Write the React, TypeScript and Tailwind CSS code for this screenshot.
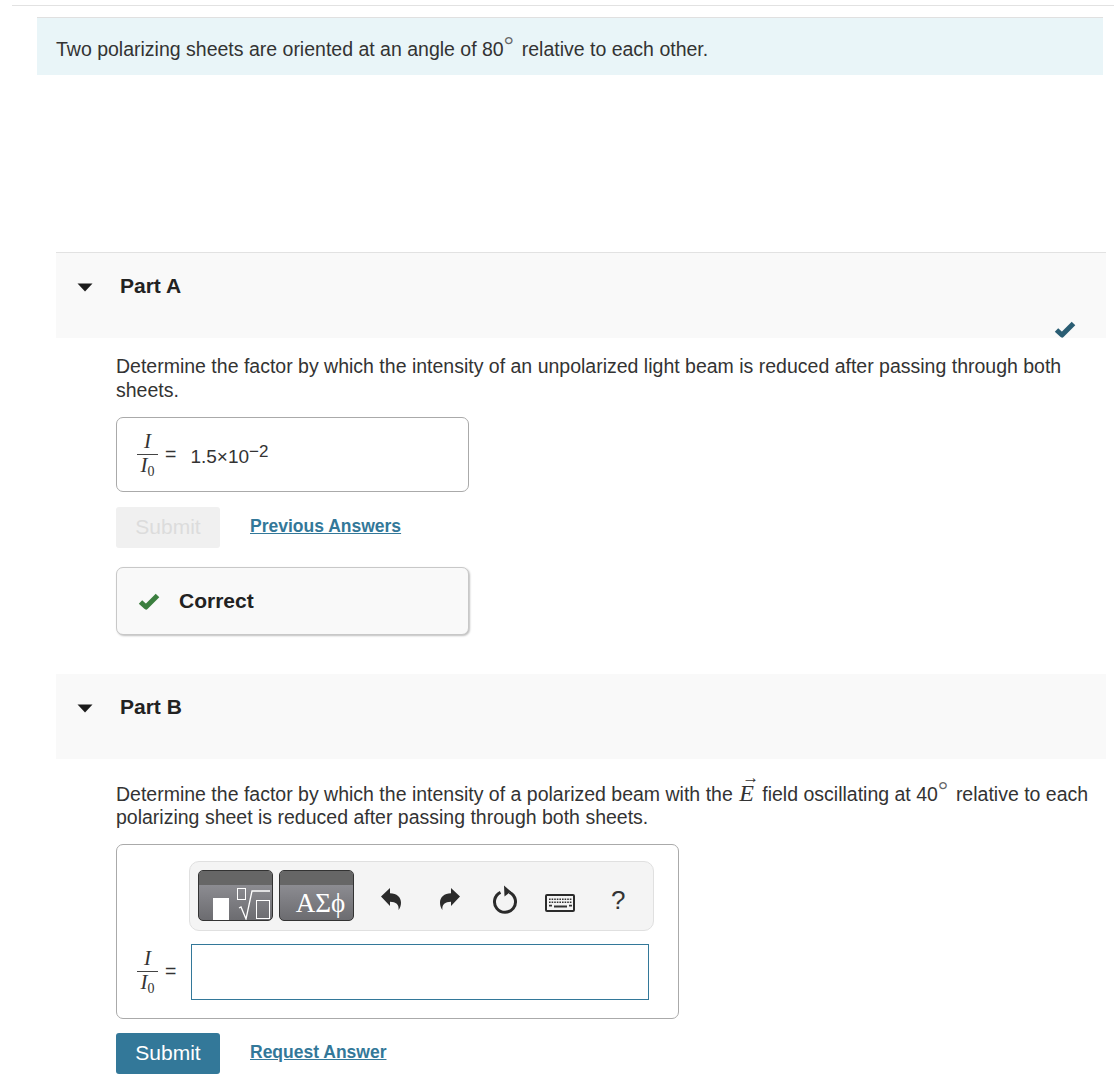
const sans = "font-['Liberation_Sans',Arial,sans-serif]";
const serif = "font-['Liberation_Serif','Times_New_Roman',serif]";

function Fraction() {
  return (
    <span className={`${serif} inline-flex w-[21px] flex-col items-center text-[21px] text-[#333]`}>
      <span className="h-[23px] w-full border-b border-[#444] text-center italic leading-[19px]">I</span>
      <span className="h-[23px] text-center leading-[21px]">
        <i>I</i>
        <span className="relative top-[4px] text-[14px]">0</span>
      </span>
    </span>
  );
}

function Degree() {
  return <span className={`${serif} relative top-[-3px] text-[25px] font-normal leading-none text-[#666]`}>°</span>;
}

function Caret() {
  return (
    <svg width="16" height="9" viewBox="0 0 16 9" className="mt-[9px] shrink-0">
      <path d="M0.5 0.5H15.5L8 8.5Z" fill="#1c1c1c" />
    </svg>
  );
}

function CheckMark({ className }: { className: string }) {
  return (
    <svg width="22" height="17" viewBox="0 0 22 17" className={className}>
      <path d="M2.500 9 8 14 19.500 2.500" fill="none" stroke="currentColor" strokeWidth="5" strokeLinejoin="round" />
    </svg>
  );
}

function PartHeader({ title, check }: { title: string; check?: boolean }) {
  return (
    <div className="relative ml-[56px] flex h-[85px] w-[1050px] items-start bg-[#f9f9f9] pl-[21px] pt-[21px]">
      <Caret />
      <h2 className="ml-[27px] text-[21px] font-bold leading-[24px] text-[#222]">{title}</h2>
      {check && <CheckMark className="absolute right-[30px] bottom-0 text-[#2a5d73]" />}
    </div>
  );
}

function ReplyIcon({ flip }: { flip?: boolean }) {
  return (
    <svg width="22" height="24" viewBox="0 0 22 24" className={flip ? "-scale-x-100" : ""}>
      <path
        d="M1 9.500 10 1v5.200c6.800.3 11 3.700 11 9.600 0 2.900-1 5.300-2.400 7.200.6-5.700-2.600-8.200-8.600-8.300V19Z"
        fill="#2b2b2b"
      />
    </svg>
  );
}

function ResetIcon() {
  return (
    <svg width="26" height="30" viewBox="0 0 26 30">
      <path d="M8.500 7.300A10.500 10.500 0 1 0 17.500 7.300" fill="none" stroke="#2b2b2b" strokeWidth="3" />
      <path d="M12 0.500 19 6.500 12.500 11.500Z" fill="#2b2b2b" />
    </svg>
  );
}

function KeyboardIcon() {
  const keys = [];
  for (let x = 4; x < 26; x += 2.6) keys.push(`M${x} 4.500h1.600v1.600h-1.600Z`, `M${x} 7.500h1.600v1.600h-1.600Z`);
  return (
    <svg width="30" height="18" viewBox="0 0 30 18">
      <rect x="1" y="1" width="28" height="16" rx="1" fill="#f4f4f4" stroke="#2b2b2b" strokeWidth="2" />
      <path d={keys.join("")} fill="#333" />
      <path d="M4 10.800h3v1.600H4ZM9 11.500h13v2H9ZM24 10.800h3v1.600h-3Z" fill="#333" />
    </svg>
  );
}

function TemplateButton() {
  return (
    <div className="relative h-[51px] w-[75px] overflow-hidden rounded-[5px] border border-[#333] bg-gradient-to-b from-[#99999f] to-[#6c6c70]">
      <div className="h-[14px] bg-[#666]" />
      <svg width="75" height="38" viewBox="0 0 75 38" className="absolute left-0 top-[14px]">
        <rect x="14" y="13" width="16" height="23" fill="#fff" />
        <rect x="38.500" y="3.500" width="8" height="11" fill="none" stroke="#fff" />
        <path d="M40 23l2-1 5 12 6-28h18" fill="none" stroke="#fff" strokeWidth="1.300" />
        <rect x="57.500" y="15.500" width="13" height="18" fill="none" stroke="#fff" />
      </svg>
    </div>
  );
}

function SymbolButton() {
  return (
    <div className="h-[51px] w-[75px] overflow-hidden rounded-[5px] border border-[#333] bg-gradient-to-b from-[#99999f] to-[#6c6c70]">
      <div className="h-[14px] bg-[#666]" />
      <div className={`${serif} pl-[8px] pt-[2px] text-center text-[27px] leading-[32px] text-white`}>ΑΣϕ</div>
    </div>
  );
}

function Toolbar() {
  return (
    <div className="ml-[72px] flex h-[70px] w-[465px] items-center rounded-[10px] border border-[#e0e0e0] bg-[#f4f4f4] pl-[8px]">
      <div className="mb-px">
        <TemplateButton />
      </div>
      <div className="mb-px ml-[6px]">
        <SymbolButton />
      </div>
      <div className="ml-[26px] flex pt-[6px]">
        <ReplyIcon />
      </div>
      <div className="ml-[37px] flex pt-[6px]">
        <ReplyIcon flip />
      </div>
      <div className="ml-[31px] flex pt-[8px]">
        <ResetIcon />
      </div>
      <div className="ml-[27px] flex pt-[13px]">
        <KeyboardIcon />
      </div>
      <span className="ml-[36px] pt-[8px] text-[26px] leading-none text-[#333]">?</span>
    </div>
  );
}

function Actions({ disabled, link }: { disabled?: boolean; link: string }) {
  return (
    <div className="ml-[116px] flex items-center">
      <button
        className={`h-[41px] w-[104px] rounded-[3px] pb-[2px] text-[21px] ${
          disabled ? "bg-[#f0f0f0] text-[#dcdcdc]" : "bg-[#337899] text-white"
        }`}
      >
        Submit
      </button>
      <a className="mb-[2px] ml-[30px] text-[17.500px] font-bold text-[#337899] underline">{link}</a>
    </div>
  );
}

export default function App() {
  return (
    <div className={`${sans} h-[1092px] w-[1114px] overflow-hidden bg-white pt-[5px] text-[19.500px] text-[#333]`}>
      <div className="ml-[12px] border-t border-[#e2e2e2]" />
      <div className="ml-[37px] mt-[11px] flex h-[58px] w-[1066px] items-center border-t border-[#e0e0e0] bg-[#e9f5f8] pl-[19px] pt-[6px]">
        <p>
          Two polarizing sheets are oriented at an angle of 80
          <Degree />
          <span className="ml-[8px]">relative to each other.</span>
        </p>
      </div>

      <div className="mt-[177px] ml-[56px] w-[1050px] border-t border-[#e2e2e2]" />
      <PartHeader title="Part A" check />
      <p className="ml-[116px] mt-[16px] w-[960px] leading-[24px]">
        Determine the factor by which the intensity of an unpolarized light beam is reduced after passing through both
        sheets.
      </p>
      <div className="ml-[116px] mt-[15px] flex h-[75px] w-[353px] items-center rounded-[7px] border border-[#aaa] pl-[20px]">
        <Fraction />
        <span className="ml-[7px] text-[#333]">=</span>
        <span className="ml-[14px] pt-[6px] text-[19px]">
          1.5×10<span className="relative top-[-6px] text-[17px] leading-none">−2</span>
        </span>
      </div>
      <div className="mt-[15px]">
        <Actions disabled link="Previous Answers" />
      </div>
      <div className="ml-[116px] mt-[19px] flex h-[68px] w-[353px] items-center rounded-[7px] border border-[#c8c8c8] bg-[#f9f9f9] pl-[21px] shadow-[1px_1px_2px_rgba(0,0,0,0.25)]">
        <CheckMark className="text-[#3b7f3f]" />
        <span className="ml-[19px] text-[21px] font-bold text-[#222]">Correct</span>
      </div>

      <div className="mt-[39px]">
        <PartHeader title="Part B" />
      </div>
      <div className="ml-[116px] mt-[21px] w-[980px] leading-[23px]">
        Determine the factor by which the intensity of a polarized beam with the{" "}
        <span className={`${serif} relative ml-px mr-[3px] text-[24px] italic leading-none`}>
          E
          <span className="absolute left-[3px] top-[-11px] text-[17px] not-italic leading-none">→</span>
        </span>{" "}
        field oscillating at 40
        <Degree />
        <span className="ml-[8px]">relative to each polarizing sheet is reduced after passing through both sheets.</span>
      </div>
      <div className="ml-[116px] mt-[15px] h-[175px] w-[563px] rounded-[7px] border border-[#aaa] pt-[16px]">
        <Toolbar />
        <div className="mt-[13px] flex items-center pl-[20px]">
          <Fraction />
          <span className="ml-[7px]">=</span>
          <div className="ml-[15px] h-[56px] w-[458px] border border-[#337899]" />
        </div>
      </div>
      <div className="mt-[14px]">
        <Actions link="Request Answer" />
      </div>
    </div>
  );
}
